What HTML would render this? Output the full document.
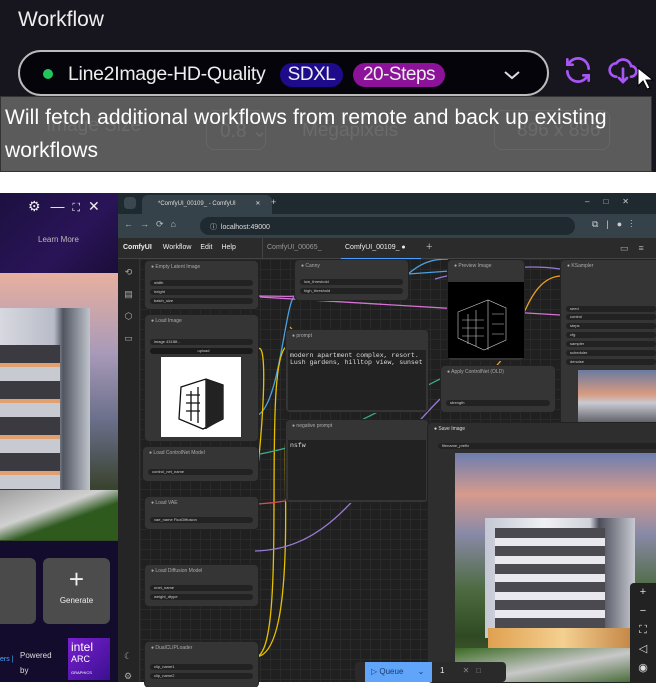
<!DOCTYPE html>
<html><head><meta charset="utf-8"><style>
*{margin:0;padding:0;box-sizing:border-box}
body{width:656px;height:682px;overflow:hidden;background:#fff;font-family:"Liberation Sans",sans-serif;position:relative}
.a{position:absolute}
.node{position:absolute;background:#353535;border-radius:4px;box-shadow:0 0 0 1px #222}
.nt{color:#aaa;font-size:5px;padding:3px 6px}
.w{position:absolute;left:5px;right:5px;height:6px;background:#222;border-radius:3px;font-size:4px;color:#ccc;padding-left:4px;line-height:6px}
</style></head><body>
<!-- top section -->
<div class="a" style="left:0;top:0;width:656px;height:172px;background:#17161f"></div>
<div class="a" style="left:18px;top:8px;color:#eee;font-size:21px">Workflow</div>
<div class="a" style="left:18px;top:50px;width:531px;height:46px;border:2px solid #bbb;border-radius:23px;background:#05040a"></div>
<div class="a" style="left:43px;top:69px;width:10px;height:10px;border-radius:50%;background:#22c55e"></div>
<div class="a" style="left:68px;top:63px;color:#eee;font-size:19.5px;letter-spacing:-0.3px">Line2Image-HD-Quality</div>
<div class="a" style="left:280px;top:63px;width:63px;height:24px;border-radius:12px;background:#1e0b8c;color:#eee;font-size:19px;text-align:center;line-height:24px;letter-spacing:-0.5px">SDXL</div>
<div class="a" style="left:353px;top:63px;width:92px;height:24px;border-radius:12px;background:#8b1299;color:#eee;font-size:19px;text-align:center;line-height:24px;letter-spacing:-0.5px">20-Steps</div>
<svg class="a" style="left:502px;top:68px" width="20" height="14"><path d="M3 4l7 6 7-6" stroke="#ddd" stroke-width="2" fill="none"/></svg>
<svg class="a" style="left:562px;top:54px" width="32" height="32" viewBox="0 0 24 24" fill="none" stroke="#a855f7" stroke-width="2" stroke-linecap="round"><path d="M20 11A8 8 0 0 0 6 6L4 8M4 4v4h4M4 13a8 8 0 0 0 14 5l2-2M20 20v-4h-4"/></svg>
<svg class="a" style="left:606px;top:54px" width="34" height="32" viewBox="0 0 24 24" fill="none" stroke="#a855f7" stroke-width="2" stroke-linecap="round"><path d="M7 17a5 5 0 0 1 0-10 6 6 0 0 1 11 2 4 4 0 0 1 0 8M12 11v10M9 18l3 3 3-3"/></svg>
<svg class="a" style="left:636px;top:66px" width="18" height="26"><path d="M2 2v18l5-5 4 8 3-1-4-8h7z" fill="#fff" stroke="#000"/></svg>
<div class="a" style="left:0;top:96px;width:652px;height:76px;background:#5b5b5b;border:1px solid #333"></div>
<div class="a" style="left:46px;top:115px;color:#6b6b6b;font-size:19px">Image Size</div>
<div class="a" style="left:206px;top:110px;width:60px;height:40px;border:1px solid #666;border-radius:8px"></div>
<div class="a" style="left:220px;top:120px;color:#6b6b6b;font-size:19px">0.8 ⌄</div>
<div class="a" style="left:302px;top:120px;color:#6b6b6b;font-size:19px">Megapixels</div>
<div class="a" style="left:494px;top:110px;width:116px;height:40px;border:1px solid #666;border-radius:8px;color:#6b6b6b;font-size:19px;padding:9px 0 0 22px">896 x 896</div>
<div class="a" style="left:5px;top:101px;color:#fff;font-size:21px;line-height:33px;letter-spacing:0.1px;width:645px">Will fetch additional workflows from remote and back up existing workflows</div>

<!-- left app panel -->
<div class="a" style="left:0;top:193px;width:118px;height:489px;background:#140c2c"></div>
<div class="a" style="left:0;top:193px;width:118px;height:80px;background:linear-gradient(135deg,#1c1040,#2a1458 60%,#1a0d38)"></div>
<div class="a" style="left:28px;top:198px;color:#eee;font-size:14px">⚙ <span style="margin-left:6px">—</span> <span style="margin-left:4px;font-size:11px">⛶</span> <span style="margin-left:4px">✕</span></div>
<div class="a" style="left:38px;top:235px;color:#bbb;font-size:8px">Learn More</div>
<div class="a" style="left:0;top:273px;width:118px;height:268px;background:linear-gradient(180deg,#e8b0a0 0%,#a89ab8 30%,#6a6f8a 55%,#3a4330 80%,#2e4a22 100%)"></div>
<div class="a" style="left:0;top:308px;width:90px;height:200px;background:linear-gradient(90deg,#d8d8e0,#b8bcc8 60%,#505560 70%,#c0c4cc)"></div>
<div class="a" style="left:0;top:345px;width:60px;height:150px;background:repeating-linear-gradient(180deg,#3b3a40 0 18px,#e0a070 18px 22px,#c8cad2 22px 36px)"></div>
<div class="a" style="left:0;top:490px;width:118px;height:50px;background:linear-gradient(160deg,#a0a0a0,#d0d0d0 40%,#2e5a1e 60%)"></div>
<div class="a" style="left:-10px;top:558px;width:46px;height:66px;background:#4a4a4a;border-radius:6px"></div>
<div class="a" style="left:43px;top:558px;width:67px;height:66px;background:#4c4c4c;border-radius:6px;color:#eee;text-align:center"><div style="font-size:26px;line-height:34px;margin-top:4px">+</div><div style="font-size:8px">Generate</div></div>
<div class="a" style="left:0;top:656px;color:#4af;font-size:7px">ers |</div>
<div class="a" style="left:20px;top:648px;color:#ddd;font-size:8px;line-height:15px">Powered<br>by</div>
<div class="a" style="left:68px;top:638px;width:42px;height:42px;background:linear-gradient(135deg,#7a1fd0,#3a1090);color:#fff;font-size:12px;line-height:11px;padding:4px 3px">intel<br><span style="font-size:9px">ARC</span><br><span style="font-size:4px">GRAPHICS</span></div>

<!-- browser -->
<div class="a" style="left:118px;top:193px;width:538px;height:21px;background:#1f2a30"></div>
<div class="a" style="left:124px;top:197px;width:12px;height:12px;background:#3a474f;border-radius:4px"></div>
<div class="a" style="left:142px;top:195px;width:130px;height:19px;background:#35424a;border-radius:6px 6px 0 0;color:#ddd;font-size:6px;padding:5px 0 0 16px">*ComfyUI_00109_ - ComfyUI <span style="margin-left:18px">✕</span></div>
<div class="a" style="left:271px;top:197px;color:#ccc;font-size:9px">+</div>
<div class="a" style="left:585px;top:197px;color:#ccc;font-size:8px;letter-spacing:14px">–□✕</div>
<div class="a" style="left:118px;top:214px;width:538px;height:24px;background:#35424a"></div>
<div class="a" style="left:124px;top:219px;color:#bbb;font-size:9px;letter-spacing:7px">←→⟳⌂</div>
<div class="a" style="left:200px;top:217px;width:375px;height:18px;background:#1f2a30;border-radius:9px;color:#ddd;font-size:7px;padding:5px 0 0 10px">ⓘ &nbsp;localhost:49000</div>
<div class="a" style="left:592px;top:219px;color:#ccc;font-size:9px;letter-spacing:8px">⧉|●⋮</div>
<div class="a" style="left:118px;top:238px;width:538px;height:21px;background:#2b2b2b;border-bottom:1px solid #444"></div>
<div class="a" style="left:123px;top:244px;color:#eee;font-size:7px;font-weight:bold">ComfyUI <span style="font-weight:normal;margin-left:9px">Workflow</span><span style="font-weight:normal;margin-left:9px">Edit</span><span style="font-weight:normal;margin-left:9px">Help</span></div>
<div class="a" style="left:262px;top:238px;width:78px;height:21px;border-left:1px solid #444;color:#999;font-size:7px;padding:6px 4px">ComfyUI_00065_</div>
<div class="a" style="left:341px;top:238px;width:80px;height:21px;color:#eee;font-size:7px;padding:6px 4px;border-bottom:1px solid #4a9fff">ComfyUI_00109_ ●</div>
<div class="a" style="left:426px;top:241px;color:#aaa;font-size:11px">+</div>
<div class="a" style="left:620px;top:243px;color:#aaa;font-size:9px;letter-spacing:10px">▭≡</div>
<!-- canvas -->
<div class="a" style="left:140px;top:259px;width:516px;height:423px;background-color:#202020;background-image:linear-gradient(#2a2a2a 1px,transparent 1px),linear-gradient(90deg,#2a2a2a 1px,transparent 1px);background-size:10px 10px"></div>
<div class="a" style="left:118px;top:259px;width:22px;height:423px;background:#252525;border-right:1px solid #333;color:#aaa;font-size:9px;text-align:center;line-height:22px;padding-top:2px">⟲<br>▤<br>⬡<br>▭</div>
<div class="a" style="left:124px;top:646px;color:#aaa;font-size:9px;line-height:20px">☾<br>⚙</div>

<svg class="a" style="left:140px;top:259px" width="516" height="423" fill="none" stroke-width="1.3">
<path d="M116 37C150 37 150 38 155 37" stroke="#d673d6"/>
<path d="M116 157C140 150 145 40 155 37" stroke="#4aa3e0"/>
<path d="M268 15C280 5 290 0 308 0" stroke="#4aa3e0"/>
<path d="M268 15L310 12" stroke="#4aa3e0"/>
<path d="M115 398C150 398 120 100 147 87" stroke="#e6c100"/>
<path d="M115 398C160 398 140 180 147 177" stroke="#e6c100"/>
<path d="M118 90C130 80 120 200 116 220" stroke="#e6c100"/>
<path d="M115 292C200 290 230 210 300 140" stroke="#9a7ad8"/>
<path d="M118 245C200 240 260 200 300 170" stroke="#d05050"/>
<path d="M115 196C200 180 240 150 300 120" stroke="#3aa88a"/>
<path d="M150 68C170 90 170 110 195 115" stroke="#f0a020"/>
<path d="M345 115C380 100 380 20 420 17" stroke="#f0a020"/>
<path d="M295 20C330 10 390 5 420 10" stroke="#9a7ad8"/>
<path d="M120 38L420 56" stroke="#d673d6"/>
</svg>

<div class="node" style="left:145px;top:261px;width:113px;height:48px"><div class="nt">● Empty Latent Image</div>
<div class="w" style="top:19px">width</div><div class="w" style="top:28px">height</div><div class="w" style="top:37px">batch_size</div></div>
<div class="node" style="left:145px;top:315px;width:113px;height:126px"><div class="nt">● Load Image</div>
<div class="w" style="top:24px">image 431f8f...</div><div class="w" style="top:33px;background:#1a1a1a;text-align:center">upload</div>
<div class="a" style="left:16px;top:42px;width:80px;height:80px;background:#fff"><svg width="80" height="80"><g stroke="#111" fill="none" stroke-width="1.3"><path d="M20 30L45 22L62 28V62L42 72L18 62Z"/><path d="M45 22V72M25 38h14M25 46h14M25 54h14M50 34h9M50 44h9M50 54h9M30 34v30M37 30v36"/></g><path d="M45 22L62 28V62L45 72Z" fill="#222"/></svg></div></div>
<div class="node" style="left:143px;top:447px;width:115px;height:34px"><div class="nt">● Load ControlNet Model</div><div class="w" style="top:22px">control_net_name</div></div>
<div class="node" style="left:145px;top:497px;width:113px;height:32px"><div class="nt">● Load VAE</div><div class="w" style="top:20px">vae_name FluxDiffusion</div></div>
<div class="node" style="left:145px;top:565px;width:113px;height:41px"><div class="nt">● Load Diffusion Model</div><div class="w" style="top:20px">unet_name</div><div class="w" style="top:29px">weight_dtype</div></div>
<div class="node" style="left:145px;top:642px;width:113px;height:45px"><div class="nt">● DualCLIPLoader</div><div class="w" style="top:22px">clip_name1</div><div class="w" style="top:31px">clip_name2</div></div>
<div class="node" style="left:295px;top:260px;width:113px;height:40px"><div class="nt">● Canny</div><div class="w" style="top:19px">low_threshold</div><div class="w" style="top:28px">high_threshold</div></div>
<div class="node" style="left:286px;top:330px;width:142px;height:82px"><div class="nt">● prompt</div><div class="a" style="left:2px;top:20px;right:2px;bottom:2px;background:#222;color:#ddd;font-family:'Liberation Mono',monospace;font-size:6.5px;padding:2px">modern apartment complex, resort. Lush gardens, hilltop view, sunset</div></div>
<div class="node" style="left:286px;top:420px;width:142px;height:82px"><div class="nt">● negative prompt</div><div class="a" style="left:2px;top:20px;right:2px;bottom:2px;background:#222;color:#ddd;font-family:'Liberation Mono',monospace;font-size:6.5px;padding:2px">nsfw</div></div>
<div class="node" style="left:448px;top:260px;width:76px;height:100px"><div class="nt">● Preview Image</div><div class="a" style="left:0;top:22px;width:76px;height:76px;background:#000"><svg width="76" height="76"><g stroke="#ccc" fill="none" stroke-width=".6"><path d="M10 30L40 18L58 26V58L36 68L10 56Z"/><path d="M40 18V68M14 38h22M14 46h22M14 54h22M44 32h12M44 42h12M44 52h12M20 32v30M28 28v36"/></g></svg></div></div>
<div class="node" style="left:441px;top:366px;width:114px;height:46px"><div class="nt">● Apply ControlNet (OLD)</div><div class="w" style="top:34px">strength</div></div>
<div class="node" style="left:561px;top:260px;width:100px;height:170px"><div class="nt">● KSampler</div>
<div class="w" style="top:46px">seed</div><div class="w" style="top:54px">control</div><div class="w" style="top:63px">steps</div><div class="w" style="top:72px">cfg</div><div class="w" style="top:81px">sampler</div><div class="w" style="top:90px">scheduler</div><div class="w" style="top:99px">denoise</div>
<div class="a" style="left:17px;top:110px;width:83px;height:60px;background:linear-gradient(180deg,#6a7aa0,#d89a80 40%,#c8cad2 55%,#3a3a40)"></div></div>
<div class="node" style="left:428px;top:423px;width:240px;height:259px;background:#2e2e2e"><div class="nt" style="color:#ddd">● Save Image</div><div class="w" style="top:20px;left:10px">filename_prefix</div>
<div class="a" style="left:27px;top:30px;width:210px;height:229px;background:linear-gradient(180deg,#6d7eb0 0%,#d69a8c 18%,#8a8aa8 35%,#4c6a40 60%,#2f4a22 80%,#586048 100%)"></div>
<div class="a" style="left:57px;top:95px;width:150px;height:120px;background:linear-gradient(90deg,#c4c8d4,#f0f0f4 40%,#d0d2da 70%,#4a4d58 76%,#c8cad2)"></div>
<div class="a" style="left:67px;top:105px;width:110px;height:100px;background:repeating-linear-gradient(180deg,#4a4a50 0 10px,#e8e8ee 10px 18px)"></div>
<div class="a" style="left:60px;top:205px;width:150px;height:20px;background:linear-gradient(90deg,#e0a050,#f4d090,#c08040)"></div>
<div class="a" style="left:27px;top:225px;width:210px;height:34px;background:linear-gradient(170deg,#3a6a22,#c8c8c8 50%,#2f5a1e)"></div></div>
<div class="a" style="left:630px;top:583px;width:26px;height:99px;background:#222;border-radius:4px 0 0 0;color:#ddd;font-size:11px;text-align:center;line-height:19px">+<br>−<br>⛶<br>◁<br>◉</div>
<div class="a" style="left:355px;top:662px;width:151px;height:20px;background:#2a2a2a;border-radius:4px"></div>
<div class="a" style="left:365px;top:662px;width:67px;height:20px;background:#60a5fa;color:#1a3a6a;font-size:8px;padding:5px 0 0 6px">▷ Queue <span style="margin-left:12px">⌄</span></div>
<div class="a" style="left:440px;top:666px;color:#eee;font-size:8px">1 <span style="margin-left:16px;color:#888">✕ &nbsp; □</span></div>
</body></html>
